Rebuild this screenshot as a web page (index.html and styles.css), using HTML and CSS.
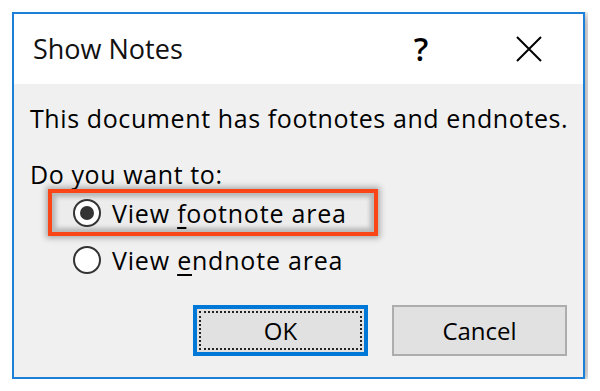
FILE: index.html
```
<!DOCTYPE html>
<html lang="en">
<head>
    <meta charset="UTF-8">
    <meta name="viewport" content="width=device-width, initial-scale=1.0">
    <title>Show Notes</title>
    <link rel="stylesheet" href="styles.css">
</head>
<body>
    <div class="dialog">
        <div class="dialog-titlebar">
            <span class="dialog-title">Show Notes</span>
            <span class="caption-btn help-btn">?</span>
            <span class="caption-btn close-btn">
                <svg width="26" height="26" viewBox="0 0 26 26">
                    <path d="M1 1 L25 25 M25 1 L1 25" stroke="#000" stroke-width="2" fill="none"/>
                </svg>
            </span>
        </div>
        <div class="dialog-body">
            <p class="dialog-text">This document has footnotes and endnotes.</p>
            <p class="dialog-text question">Do you want to:</p>
            <div class="options">
                <label class="option highlighted">
                    <span class="radio checked"></span>
                    <span class="option-label">View <u>f</u>ootnote area</span>
                </label>
                <label class="option">
                    <span class="radio"></span>
                    <span class="option-label">View <u>e</u>ndnote area</span>
                </label>
            </div>
            <div class="dialog-btns">
                <button class="dialog-btn default-btn" type="button">OK</button>
                <button class="dialog-btn" type="button">Cancel</button>
            </div>
        </div>
    </div>
</body>
</html>
```

FILE: styles.css
```
body {
    margin: 12px;
    background-color: #fff;
    font-family: "Open Sans", "Noto Sans", sans-serif;
    color: #000;
}
.dialog {
    width: 573px;
    height: 367px;
    box-sizing: border-box;
    border: 2px solid #1c80d8;
    background-color: #f0f0f0;
    box-shadow: 0 0 11px rgba(0, 0, 0, 0.3), 3px 4px 10px rgba(0, 0, 0, 0.2);
    display: flex;
    flex-direction: column;
}
.dialog-titlebar {
    height: 70px;
    background-color: #fff;
    display: flex;
    align-items: center;
    padding-left: 19px;
}
.dialog-title {
    flex: 1;
    font-size: 27px;
    line-height: 70px;
    color: #111;
}
.caption-btn {
    width: 108px;
    height: 70px;
    display: flex;
    align-items: center;
    justify-content: center;
}
.help-btn {
    font-size: 32px;
    font-weight: 600;
    padding-bottom: 2px;
    box-sizing: border-box;
}
.dialog-body {
    flex: 1;
    padding: 19px 16px 0 16px;
}
.dialog-text {
    margin: 0;
    font-size: 25px;
    letter-spacing: 0.6px;
    line-height: 30px;
    white-space: nowrap;
}
.question {
    margin-top: 26px;
}
.options {
    margin-left: 18px;
    width: 330px;
    display: flex;
    flex-direction: column;
}
.option {
    height: 47px;
    box-sizing: border-box;
    border: 4px solid transparent;
    padding-left: 21px;
    display: flex;
    align-items: center;
    font-size: 25px;
    letter-spacing: 0.8px;
    white-space: nowrap;
}
.highlighted {
    border-color: #fa4616;
    background-color: #ececec;
    box-shadow: 0 0 6px 2px rgba(0, 0, 0, 0.3), inset 0 0 4px 4px rgba(0, 0, 0, 0.22);
}
.radio {
    width: 28px;
    height: 28px;
    box-sizing: border-box;
    border: 2px solid #333;
    border-radius: 50%;
    background-color: #fff;
    display: flex;
    align-items: center;
    justify-content: center;
    margin-right: 11px;
}
.radio.checked::after {
    content: "";
    width: 14px;
    height: 14px;
    border-radius: 50%;
    background-color: #333;
}
.option-label u {
    text-decoration-thickness: 2px;
    text-underline-offset: 4px;
}
.dialog-btns {
    display: flex;
    justify-content: flex-end;
    gap: 24px;
    margin-top: 22px;
}
.dialog-btn {
    position: relative;
    width: 175px;
    height: 51px;
    border: 2px solid #adadad;
    background-color: #e1e1e1;
    font-family: "Open Sans", "Noto Sans", sans-serif;
    font-size: 24px;
    color: #000;
    padding: 0;
}
.default-btn {
    border: 4px solid #0078d7;
}
.default-btn::after {
    content: "";
    position: absolute;
    top: 2px;
    left: 2px;
    right: 2px;
    bottom: 2px;
    border: 2px dotted #222;
}
```
